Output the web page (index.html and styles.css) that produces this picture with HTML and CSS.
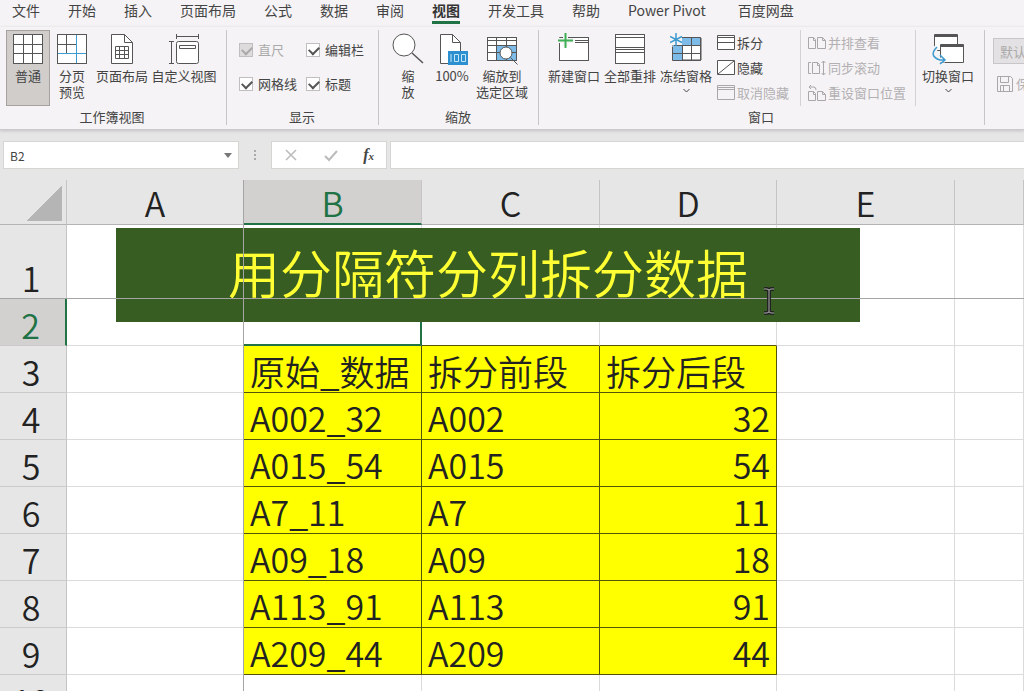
FILE: index.html
```html
<!DOCTYPE html>
<html lang="zh-CN">
<head>
    <meta charset="UTF-8">
    <title>用分隔符分列拆分数据</title>
    <link rel="stylesheet" href="styles.css">
</head>
<body>
<nav class="tabs">
    <a href="#">文件</a>
    <a href="#">开始</a>
    <a href="#">插入</a>
    <a href="#">页面布局</a>
    <a href="#">公式</a>
    <a href="#">数据</a>
    <a href="#">审阅</a>
    <a href="#" class="cur">视图</a>
    <a href="#">开发工具</a>
    <a href="#">帮助</a>
    <a href="#">Power Pivot</a>
    <a href="#" class="last">百度网盘</a>
</nav>

<div class="ribbon">
    <!-- 工作簿视图 -->
    <section class="group">
        <div class="tools">
            <button class="big narrow on">
                <svg width="32" height="32" viewBox="0 0 32 32"><path fill="#fff" d="M1.500 1.500h29v29h-29z"/><path d="M1.500 1.500h29v29h-29zM11.500 1.500v29M20.500 1.500v29M1.500 11.500h29M1.500 20.500h29"/></svg>
                <span>普通</span>
            </button>
            <button class="big narrow">
                <svg width="32" height="32" viewBox="0 0 32 32"><path fill="#fff" d="M1.500 1.500h29v29h-29z"/><path d="M10.500 2v18M2 11.500h18"/><path d="M1.500 1.500h29v29h-29z"/><path class="blue" d="M20.500 2v28M2 20.500h28"/></svg>
                <span>分页<br>预览</span>
            </button>
            <button class="big">
                <svg width="32" height="32" viewBox="0 0 32 32"><path fill="#fff" d="M5.500 1.500h13l8 8v21h-21z"/><path d="M18.500 1.500v8h8M9.500 13.500h13v12h-13zM13.500 13.500v12M18.500 13.500v12M9.500 17.500h13M9.500 21.500h13"/></svg>
                <span>页面布局</span>
            </button>
            <button class="big wide">
                <svg width="32" height="32" viewBox="0 0 32 32"><rect x="8.500" y="8.500" width="22" height="22" rx="2" fill="#fff"/><path d="M11.500 12.500h16v3h-16zM3.500 8v22M1 8.500h5M1 30.500h5M8.500 3.500h22M8.500 1v5M30.500 1v5"/></svg>
                <span>自定义视图</span>
            </button>
        </div>
        <h2>工作簿视图</h2>
    </section>

    <!-- 显示 -->
    <section class="group">
        <div class="checks">
            <label class="off"><input type="checkbox" checked disabled>直尺</label>
            <label><input type="checkbox" checked>编辑栏</label>
            <label><input type="checkbox" checked>网格线</label>
            <label><input type="checkbox" checked>标题</label>
        </div>
        <h2>显示</h2>
    </section>

    <!-- 缩放 -->
    <section class="group">
        <div class="tools">
            <button class="big narrow">
                <svg width="32" height="32" viewBox="0 0 32 32"><circle cx="12" cy="12" r="11" fill="#fff"/><path stroke-width="1.500" d="M20 20l11 10"/></svg>
                <span>缩<br>放</span>
            </button>
            <button class="big narrow">
                <svg width="32" height="32" viewBox="0 0 32 32"><path fill="#fff" d="M4.500 1.500h12l8 8v21h-20z"/><path d="M16.500 1.500v8h8"/><path class="solid" d="M12 18h20v14H12z"/><path class="white" d="M15 21v8M18.500 21.500h4v7h-4zM25.500 21.500h4v7h-4z"/></svg>
                <span>100%</span>
            </button>
            <button class="big">
                <svg width="32" height="32" viewBox="0 0 32 32"><path fill="#fff" d="M1.500 4.500h29v23h-29z"/><path class="light" d="M10 12h20v15H10z"/><path d="M1.500 4.500h29v23h-29zM1.500 7.500h29M10.500 5v22M20.500 5v22M2 12.500h28M2 19.500h28"/><circle cx="20" cy="20" r="6" fill="#fff"/><path d="M24.500 24.500l7 7"/></svg>
                <span>缩放到<br>选定区域</span>
            </button>
        </div>
        <h2>缩放</h2>
    </section>

    <!-- 窗口 -->
    <section class="group">
        <div class="tools">
            <button class="big">
                <svg width="32" height="32" viewBox="0 0 32 32"><path fill="#fff" d="M1.500 4.500h29v23h-29z"/><path d="M1.500 11v16.500h29v-23h-14M17 7.500h13M17 9.500h13"/><path class="bg" d="M0 7.500h15M7.500 2v11"/><path class="green" d="M0 7.500h15M7.500 0v15"/></svg>
                <span>新建窗口</span>
            </button>
            <button class="big">
                <svg width="32" height="32" viewBox="0 0 32 32"><path fill="#fff" d="M1.500 1.500h29v29h-29z"/><path d="M1.500 1.500h29v13h-29zM1.500 4.500h29M1.500 16.500h29v14h-29zM1.500 19.500h29"/></svg>
                <span>全部重排</span>
            </button>
            <button class="big">
                <svg width="32" height="32" viewBox="0 0 32 32"><path fill="#fff" d="M3 5h28v22H3z"/><path class="light" d="M11 5h20v7H11zM3 12h10v15H3z"/><path d="M12 4.500h18.500v23h-28V14M12.500 12v15M21.500 5v22M4 12.500h27M3 20.500h27"/><path fill="#f5f3f5" stroke="none" d="M0 0h12v12H0z"/><path class="blue" stroke-width="1.500" d="M6 0v13M0 3.500l12 6M0 9.500l12-6"/></svg>
                <span>冻结窗格</span>
                <svg class="down" width="7" height="5" viewBox="0 0 7 5"><path d="M0.500 1l3 3 3-3"/></svg>
            </button>
            <div class="small-list">
                <button class="small"><svg width="18" height="16" viewBox="0 0 18 16"><path fill="#fff" d="M0.500 0.500h17v14H0.500z"/><path d="M0.500 2.500h17M0.500 7.500h17"/></svg>拆分</button>
                <button class="small"><svg width="18" height="16" viewBox="0 0 18 16"><path fill="#fff" d="M0.500 0.500h17v14H0.500z"/><path d="M1 14L17 1"/></svg>隐藏</button>
                <button class="small" disabled><svg width="18" height="16" viewBox="0 0 18 16"><path d="M0.500 0.500h17v14H0.500zM0.500 2.500h17M0.500 4.500h17"/></svg>取消隐藏</button>
            </div>
            <div class="small-list lined">
                <button class="small" disabled><svg width="18" height="16" viewBox="0 0 18 16"><path d="M0.500 2.500h5l2 2v9h-7zM9.500 2.500h5l3 3v8h-8zM5.500 2.500v3h2M14.500 2.500v3h3"/></svg>并排查看</button>
                <button class="small" disabled><svg width="18" height="16" viewBox="0 0 18 16"><path d="M3 13.500H0.500v-11H3M4.500 2.500h5l2 2v9h-7zM9.500 2.500v3h2M15.500 1v14M13.500 3l2-2 2 2M13.500 13l2 2 2-2"/></svg>同步滚动</button>
                <button class="small" disabled><svg width="18" height="16" viewBox="0 0 18 16"><path d="M0.500 6.500h5l2 2v7h-7zM9.500 6.500h5l3 3v6h-8zM5.500 6.500v3h2M14.500 6.500v3h3M3 0L1 2l2 2M1 2h5q2 0 2 3"/></svg>重设窗口位置</button>
            </div>
            <button class="big">
                <svg width="32" height="32" viewBox="0 0 32 32"><path fill="#fff" d="M2.500 1.500h23v16h-23z"/><path stroke-width="2" d="M2.500 3h23"/><path fill="#fff" d="M8.500 11.500h23v18h-23z"/><path stroke-width="2" d="M8.500 13h23"/><path class="bg" d="M5 14q-9 9 3 13h5"/><path class="blue" stroke-width="1.500" d="M5 14q-9 9 3 13h5M8 22l5 5-5 4"/></svg>
                <span>切换窗口</span>
                <svg class="down" width="7" height="5" viewBox="0 0 7 5"><path d="M0.500 1l3 3 3-3"/></svg>
            </button>
        </div>
        <h2>窗口</h2>
    </section>

    <section class="group views">
        <select aria-label="工作表视图" disabled><option>默认</option></select>
        <button class="small" disabled><svg width="18" height="18" viewBox="0 0 18 18"><path d="M1.500 1.500h13l2 2v13h-15zM4.500 1.500v6h8v-6M4.500 16.500v-6h9v6M7.500 11v5"/></svg>保留</button>
    </section>
</div>

<div class="formula">
    <div class="name-box">
        <input type="text" value="B2" aria-label="名称框">
        <button class="arrow" aria-label="展开名称框"></button>
    </div>
    <div class="dots"><i></i><i></i><i></i></div>
    <div class="actions">
        <button aria-label="取消"><svg width="14" height="14" viewBox="0 0 14 14"><path d="M2 2l10 10M12 2L2 12"/></svg></button>
        <button aria-label="输入"><svg width="14" height="14" viewBox="0 0 14 14"><path stroke-width="2" d="M1 8l4 4 8-9"/></svg></button>
        <button class="fx" aria-label="插入函数"><em>f</em><sub>x</sub></button>
    </div>
    <input class="formula-input" type="text" aria-label="编辑栏">
</div>

<main class="sheet">
    <table>
        <colgroup><col class="c-num"><col class="c-a"><col class="c"><col class="c"><col class="c-a"><col class="c"><col></colgroup>
        <thead>
        <tr><th class="corner"></th><th>A</th><th class="sel">B</th><th>C</th><th>D</th><th>E</th><th></th></tr>
        </thead>
        <tbody>
        <tr class="first"><th>1</th><td></td><td></td><td></td><td></td><td></td><td></td></tr>
        <tr class="second"><th class="sel">2</th><td></td><td class="active"></td><td class="edge"></td><td class="edge"></td><td></td><td></td></tr>
        <tr class="head"><th>3</th><td></td><td class="y">原始_数据</td><td class="y">拆分前段</td><td class="y">拆分后段</td><td></td><td></td></tr>
        <tr><th>4</th><td></td><td class="y">A002_32</td><td class="y">A002</td><td class="y num">32</td><td></td><td></td></tr>
        <tr><th>5</th><td></td><td class="y">A015_54</td><td class="y">A015</td><td class="y num">54</td><td></td><td></td></tr>
        <tr><th>6</th><td></td><td class="y">A7_11</td><td class="y">A7</td><td class="y num">11</td><td></td><td></td></tr>
        <tr><th>7</th><td></td><td class="y">A09_18</td><td class="y">A09</td><td class="y num">18</td><td></td><td></td></tr>
        <tr><th>8</th><td></td><td class="y">A113_91</td><td class="y">A113</td><td class="y num">91</td><td></td><td></td></tr>
        <tr><th>9</th><td></td><td class="y">A209_44</td><td class="y">A209</td><td class="y num">44</td><td></td><td></td></tr>
        <tr><th>10</th><td></td><td></td><td></td><td></td><td></td><td></td></tr>
        </tbody>
    </table>
    <div class="banner">用分隔符分列拆分数据</div>
    <div class="freeze-v"></div>
    <div class="freeze-h"></div>
    <svg class="cursor" width="12" height="28" viewBox="0 0 12 28"><path class="outer" d="M1 2h3l2 1 2-1h3M6 3v22M1 26h3l2-1 2 1h3"/><path class="inner" d="M1 2h3l2 1 2-1h3M6 3v22M1 26h3l2-1 2 1h3"/></svg>
</main>
</body>
</html>
```
FILE: styles.css
```css
* {
    margin: 0;
    padding: 0;
    box-sizing: border-box;
}

body {
    height: 100vh;
    overflow: hidden;
    display: flex;
    flex-direction: column;
    background: #e6e6e6;
    color: #444;
    font-family: "Noto Sans CJK SC", sans-serif;
    font-size: 13px;
}

button, input, select {
    font: inherit;
    color: inherit;
    border: none;
    background: none;
}

svg {
    flex: none;
    fill: none;
    stroke: #555;
}

svg .blue { stroke: #3d9bd0; }
svg .green { stroke: #3faf55; stroke-width: 2; }
svg .white { stroke: #c5e5f8; }
svg .solid { fill: #2b8fd0; stroke: none; }
svg .light { fill: #7dbbe8; stroke: none; }
svg .bg { stroke: #f5f3f5; stroke-width: 5; }

/* 选项卡 */
.tabs {
    flex: none;
    display: flex;
    gap: 28px;
    height: 27px;
    padding-left: 12px;
    background: #f5f3f5;
    font-size: 14px;
    line-height: 21px;
    white-space: nowrap;
}

.tabs a {
    height: 24px;
    color: #444;
    text-decoration: none;
}

.tabs .cur {
    font-weight: bold;
    color: #333;
    border-bottom: 3px solid #217346;
}

.tabs .last {
    margin-left: 4px;
}

/* 功能区 */
.ribbon {
    flex: none;
    display: flex;
    height: 103px;
    padding: 3px 0 4px;
    overflow: hidden;
    background: #f5f3f5;
    border-bottom: 1px solid #ccc8cc;
    box-shadow: 0 1px 3px #c4c1c4;
    white-space: nowrap;
}

.group {
    flex: none;
    display: flex;
    flex-direction: column;
    justify-content: space-between;
    padding: 0 8px 0 7px;
    border-right: 1px solid #c8c5c8;
}

.group:first-child {
    padding-left: 6px;
}

.group h2 {
    font-size: 13px;
    font-weight: normal;
    line-height: 16px;
    text-align: center;
}

.tools {
    display: flex;
}

.big {
    width: 56px;
    height: 76px;
    padding-top: 3px;
    display: flex;
    flex-direction: column;
    align-items: center;
    line-height: 16px;
}

.big span {
    margin-top: 3px;
}

.narrow {
    width: 44px;
}

.wide {
    width: 68px;
}

.on {
    background: #d0cdcb;
    outline: 1px solid #a5a2a0;
    outline-offset: -1px;
}

.down {
    margin-top: 4px;
    stroke: #444;
}

.checks {
    display: grid;
    grid-template-columns: 67px 60px;
    row-gap: 14px;
    padding: 10px 4px 0 5px;
}

.checks label {
    display: flex;
    align-items: center;
    gap: 5px;
    line-height: 20px;
}

.checks input {
    appearance: none;
    width: 14px;
    height: 14px;
    background: #fff;
    border: 1px solid #c0bebe;
}

.checks input:checked::before {
    content: "";
    display: block;
    width: 8px;
    height: 5px;
    margin: 2px;
    border-left: 2px solid #555;
    border-bottom: 2px solid #555;
    transform: rotate(-45deg);
}

.checks .off {
    color: #aaa;
}

.checks .off input {
    background: #dedbdc;
}

.checks .off input::before {
    border-color: #aaa;
}

.small-list {
    display: flex;
    flex-direction: column;
    gap: 5px;
    padding: 3px 11px 0 3px;
}

.small {
    display: flex;
    align-items: center;
    gap: 2px;
    line-height: 20px;
}

.small:disabled {
    color: #b3b0b3;
}

.small:disabled svg {
    stroke: #aaa7aa;
}

.lined {
    padding: 3px 9px 0 7px;
    margin-right: 4px;
    border-left: 1px solid #d5d2d5;
    border-right: 1px solid #d5d2d5;
}

.views {
    justify-content: flex-start;
    gap: 10px;
    padding: 8px 8px 0;
}

.views select {
    width: 120px;
    height: 26px;
    padding-left: 2px;
    color: #aaa;
    background: #e3e1e3;
    border: 1px solid #c8c6c8;
    opacity: 1;
}

.views .small {
    padding-left: 3px;
}

/* 编辑栏 */
.formula {
    flex: none;
    display: flex;
    align-items: center;
    height: 50px;
    padding-left: 3px;
}

.name-box {
    display: flex;
    align-items: center;
    width: 236px;
    height: 28px;
    padding: 0 6px;
    background: #fff;
    border: 1px solid #d5d5d2;
}

.name-box input {
    flex: 1;
    min-width: 0;
    font-size: 12px;
}

.arrow {
    border: 4px solid transparent;
    border-top: 5px solid #777;
    border-bottom: none;
}

.dots {
    width: 32px;
    display: flex;
    flex-direction: column;
    align-items: center;
    gap: 2px;
}

.dots i {
    width: 2px;
    height: 2px;
    background: #aaa;
}

.actions {
    display: flex;
    align-items: center;
    justify-content: space-between;
    width: 116px;
    height: 28px;
    padding: 0 12px;
    background: #fff;
    border: 1px solid #d5d5d2;
}

.actions svg {
    display: block;
    stroke: #bbb;
    stroke-width: 1.5;
}

.fx {
    font-family: "Liberation Serif", serif;
    font-size: 16px;
    font-weight: bold;
    line-height: 20px;
}

.fx sub {
    font-size: 11px;
    font-style: italic;
    vertical-align: baseline;
}

.formula-input {
    flex: 1;
    height: 28px;
    margin-left: 3px;
    padding: 0 6px;
    background: #fff;
    border: 1px solid #d5d5d2;
    border-right: none;
}

/* 工作表 */
.sheet {
    flex: 1;
    min-height: 0;
    position: relative;
    overflow: hidden;
    background: #fff;
}

table {
    width: 100%;
    table-layout: fixed;
    border-collapse: separate;
    border-spacing: 0;
    color: #222;
    font-size: 34px;
    font-weight: 350;
    white-space: nowrap;
}

.c-num { width: 67px; }
.c-a { width: 177px; }
.c { width: 178px; }

th {
    font-weight: 350;
    background: #e6e6e6;
    border-right: 1px solid #c6c4c6;
    border-bottom: 1px solid #b5b3b5;
}

thead th {
    height: 45px;
    padding-top: 2px;
    line-height: 40px;
}

thead .sel {
    color: #217346;
    background: #d3d0d0;
    border-bottom: 2px solid #217346;
}

.corner {
    background: linear-gradient(135deg, transparent 50%, #b5b5b5 50%) 26px 5px / 36px 36px no-repeat #e6e6e6;
}

tbody tr {
    height: 47px;
}

tbody .first {
    height: 74px;
}

tbody th {
    padding-right: 4px;
    line-height: 40px;
    vertical-align: bottom;
    border-bottom-color: #cccacc;
}

tbody .sel {
    color: #217346;
    background: #d3d0d0;
    border-right: 2px solid #217346;
}

td {
    padding: 0 6px 1px;
    line-height: 40px;
    vertical-align: bottom;
    border-right: 1px solid #dcdadc;
    border-bottom: 1px solid #dcdadc;
}

.y {
    background: #ff0;
    border-color: #55550a;
}

.head td {
    font-size: 35px;
}

.num {
    text-align: right;
}

.edge {
    border-bottom-color: #55550a;
}

.active {
    border-right: 2px solid #217346;
    border-bottom: 2px solid #217346;
}

/* 浮在单元格上的标题 */
.banner {
    position: absolute;
    left: 116px;
    top: 48px;
    width: 744px;
    height: 94px;
    background: #385d22;
    color: #ff3;
    font-size: 52px;
    font-weight: 350;
    line-height: 88px;
    text-align: center;
}

.freeze-v {
    position: absolute;
    left: 243px;
    top: 0;
    bottom: 0;
    width: 1px;
    background: #a5a5a5;
}

.freeze-h {
    position: absolute;
    left: 0;
    right: 0;
    top: 118px;
    height: 1px;
    background: #a5a5a5;
}

.cursor {
    position: absolute;
    left: 763px;
    top: 107px;
}

.cursor .outer {
    stroke: #222;
    stroke-width: 4;
}

.cursor .inner {
    stroke: #aaa;
    stroke-width: 1;
}
```
